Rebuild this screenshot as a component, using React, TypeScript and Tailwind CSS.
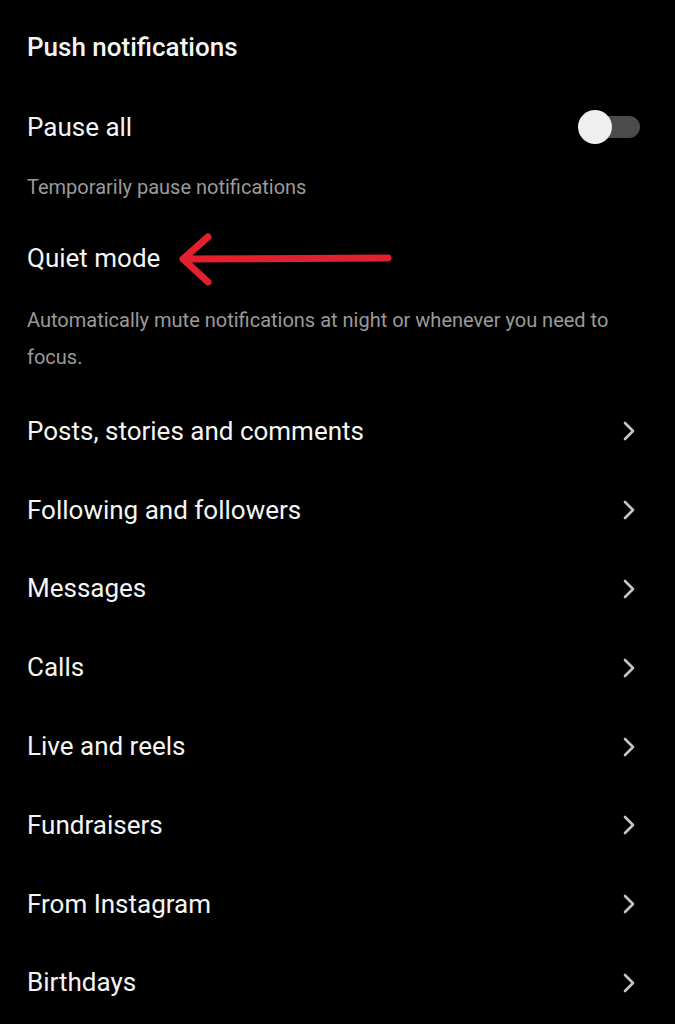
import { ReactNode } from 'react'

const rows = [
  'Posts, stories and comments',
  'Following and followers',
  'Messages',
  'Calls',
  'Live and reels',
  'Fundraisers',
  'From Instagram',
  'Birthdays',
]

function Chevron() {
  return (
    <svg width="14" height="22" viewBox="0 0 14 22" fill="none">
      <path d="M3 3 L11 11 L3 19" stroke="#c4c4c4" strokeWidth="2.6" strokeLinecap="round" strokeLinejoin="round" />
    </svg>
  )
}

function Toggle() {
  return (
    <div className="relative h-[34px] w-[62px]">
      <div className="absolute left-[6px] right-0 top-[6px] h-[22px] rounded-full bg-[#4b4b4b]" />
      <div className="absolute left-0 top-0 h-[34px] w-[34px] rounded-full bg-[#efefef]" />
    </div>
  )
}

function Row({ children }: { children: ReactNode }) {
  return (
    <div className="flex h-[78.8px] items-center justify-between">
      <span className="text-[26px] text-[#f5f5f5]">{children}</span>
      <div className="mr-[12px]">
        <Chevron />
      </div>
    </div>
  )
}

export default function App() {
  return (
    <div
      className="min-h-[1024px] w-full bg-black px-[27px]"
      style={{ fontFamily: 'Roboto, "Noto Sans", sans-serif' }}
    >
      <div className="flex h-[94px] items-center">
        <h1 className="text-[26px] font-medium text-[#f5f5f5]">Push notifications</h1>
      </div>

      <div className="flex h-[66px] items-center justify-between">
        <span className="text-[26px] text-[#f5f5f5]">Pause all</span>
        <div className="mr-[8px]">
          <Toggle />
        </div>
      </div>

      <div className="flex h-[54px] items-center">
        <span className="text-[20px] text-[#9a9a9a]">Temporarily pause notifications</span>
      </div>

      <div className="relative flex h-[88px] items-center">
        <span className="text-[26px] text-[#f5f5f5]">Quiet mode</span>
        <svg
          className="absolute left-[148px] top-[18px]"
          width="220"
          height="60"
          viewBox="0 0 220 60"
          fill="none"
        >
          <path
            d="M8 27 L213 26 M8 27 L33 5 M8 27 L33 50"
            stroke="#e3202e"
            strokeWidth="7"
            strokeLinecap="round"
            strokeLinejoin="round"
          />
        </svg>
      </div>

      <p className="text-[20px] leading-[37px] text-[#9a9a9a]">
        Automatically mute notifications at night or whenever you need to focus.
      </p>

      <div className="mt-[16px]">
        {rows.map((label) => (
          <Row key={label}>{label}</Row>
        ))}
      </div>
    </div>
  )
}
